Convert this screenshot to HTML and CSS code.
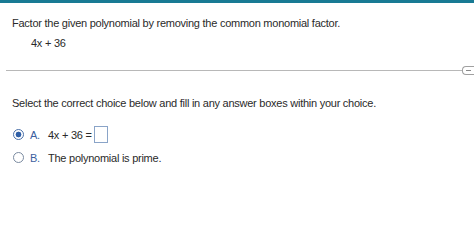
FILE: index.html
```html
<!DOCTYPE html>
<html>
<head>
<meta charset="utf-8">
<link rel="stylesheet" href="styles.css">
</head>
<body>
<div class="topbar"></div>
<div class="question">
  <p class="prompt">Factor the given polynomial by removing the common monomial factor.</p>
  <p class="expr">4x + 36</p>
</div>
<div class="divider">
  <div class="line"></div>
  <div class="handle"><span class="dots"></span></div>
</div>
<div class="answer">
  <p class="prompt">Select the correct choice below and fill in any answer boxes within your choice.</p>
  <div class="choices">
    <div class="choice">
      <span class="radio checked"></span>
      <span class="letter">A.</span>
      <span class="text">4x + 36 =</span>
      <span class="box"></span>
    </div>
    <div class="choice">
      <span class="radio"></span>
      <span class="letter">B.</span>
      <span class="text">The polynomial is prime.</span>
    </div>
  </div>
</div>
</body>
</html>
```
FILE: styles.css
```css
html, body {
  margin: 0;
  padding: 0;
  background: #fff;
}
body {
  font-family: "Liberation Sans", Arial, sans-serif;
  font-size: 11px;
  letter-spacing: -0.25px;
  line-height: 12px;
  color: #2a2a2a;
  width: 474px;
  height: 251px;
  overflow: hidden;
}
p { margin: 0; }
.topbar {
  height: 3px;
  background: #187a94;
}
.question {
  padding: 14px 0 0 12px;
}
.expr {
  margin-top: 8px;
  padding-left: 19px;
}
.divider {
  display: flex;
  align-items: center;
  margin-top: 16px;
  height: 10px;
}
.line {
  margin-left: 6px;
  flex: 1;
  height: 1px;
  background: #b8b8b8;
}
.handle {
  width: 8px;
  height: 7px;
  border: 1px solid #a0a0a0;
  border-right: none;
  border-radius: 4px 0 0 4px;
  display: flex;
  align-items: center;
  padding-left: 3px;
}
.dots {
  width: 5px;
  height: 1px;
  background: #888;
}
.answer {
  padding: 22px 0 0 12px;
}
.choices {
  margin-top: 17px;
  display: flex;
  flex-direction: column;
  gap: 6px;
}
.choice {
  display: flex;
  align-items: center;
  height: 17px;
}
.radio {
  width: 9px;
  height: 9px;
  border: 1px solid #7a8aa0;
  border-radius: 50%;
  margin-left: 1px;
  box-sizing: content-box;
}
.radio.checked {
  border-color: #4a6fa8;
  background: radial-gradient(circle, #2f5fa7 0 2.6px, #fff 3.2px);
}
.letter {
  color: #3c5fa0;
  margin-left: 6px;
  width: 18px;
}
.box {
  width: 12px;
  height: 15px;
  border: 1px solid #8aa4c8;
  margin-left: 2px;
}
```
